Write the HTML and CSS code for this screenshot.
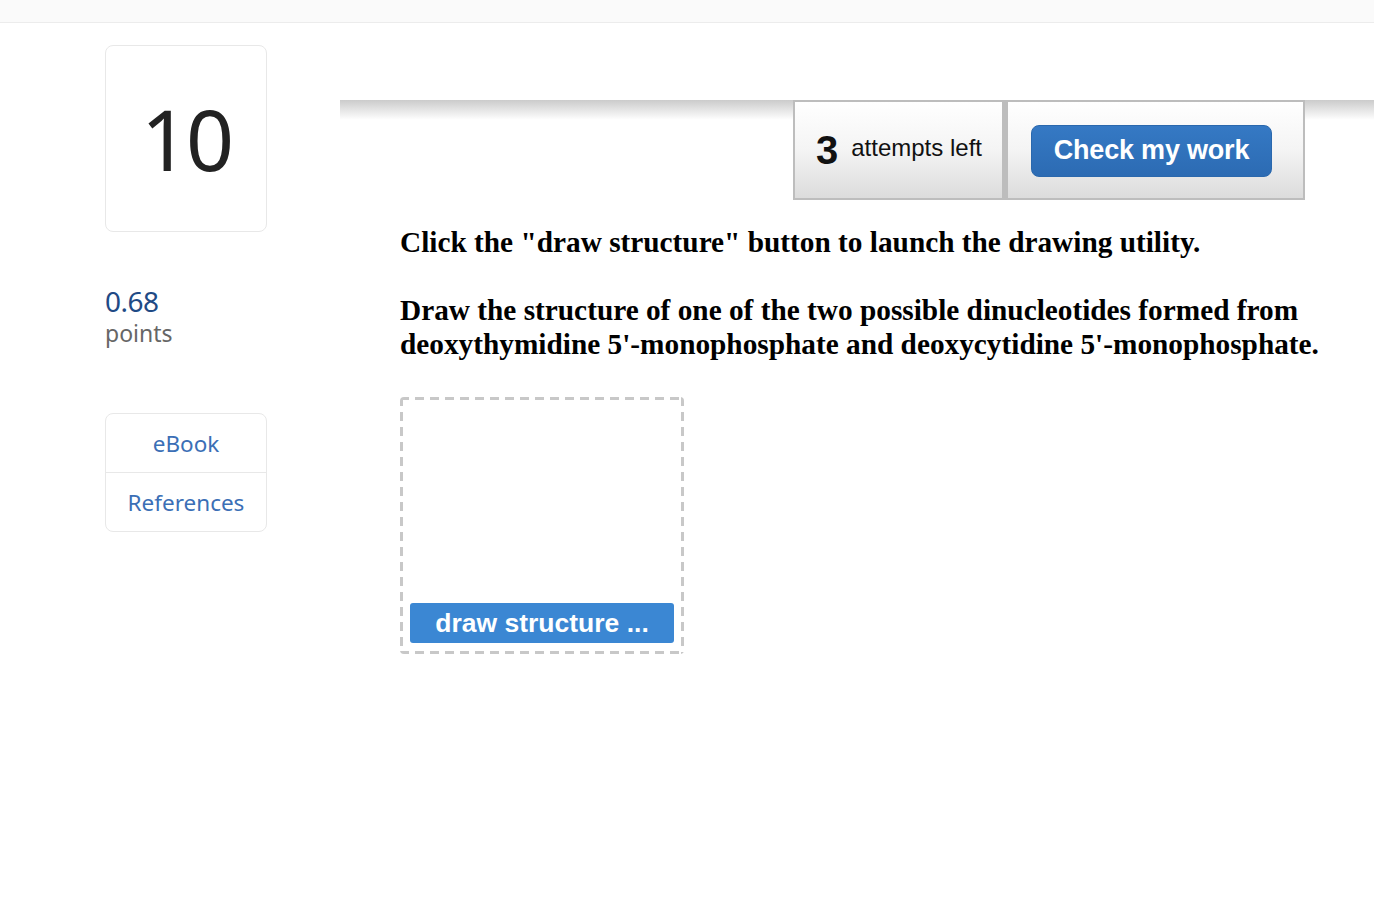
FILE: index.html
```html
<!DOCTYPE html>
<html>
<head>
  <title>Question 10</title>
  <link rel="stylesheet" href="styles.css">
</head>
<body>
  <div class="topbar"></div>
  <div class="page">
    <div class="sidebar">
      <div class="number-box">10</div>
      <div class="score">
        <span class="score-value">0.68</span>
        <span class="score-label">points</span>
      </div>
      <div class="links">
        <a class="link-row" href="#">eBook</a>
        <a class="link-row" href="#">References</a>
      </div>
    </div>
    <div class="content">
      <div class="header">
        <div class="header-boxes">
          <div class="attempts">
            <span class="attempts-count">3</span>
            <span class="attempts-label">attempts left</span>
          </div>
          <div class="check">
            <button class="check-btn">Check my work</button>
          </div>
        </div>
      </div>
      <div class="question">
        <p>Click the "draw structure" button to launch the drawing utility.</p>
        <p>Draw the structure of one of the two possible dinucleotides formed from deoxythymidine 5'-monophosphate and deoxycytidine 5'-monophosphate.</p>
        <div class="draw-area">
          <button class="draw-btn">draw structure ...</button>
        </div>
      </div>
    </div>
  </div>
</body>
</html>
```

FILE: styles.css
```css
:root {
  --border-light: #e8e8e8;
  --link: #3b6fb6;
  --score: #1f4a85;
  --box-border: #bdbdbd;
  --dash: #c8c8c8;
}

body {
  margin: 0;
  background: #ffffff;
  font-family: 'Noto Sans', 'Open Sans', sans-serif;
  color: #222;
}

.topbar {
  height: 22px;
  background: #fafafa;
  border-bottom: 1px solid #ececec;
}

.page {
  display: flex;
}

.sidebar {
  width: 162px;
  margin: 22px 0 0 105px;
  display: flex;
  flex-direction: column;
}

.number-box {
  height: 185px;
  border: 1px solid var(--border-light);
  border-radius: 8px;
  display: flex;
  align-items: center;
  justify-content: center;
  font-size: 84px;
  font-weight: 400;
  color: #222;
  letter-spacing: -3px;
  line-height: 1;
}

.score {
  display: flex;
  flex-direction: column;
  margin-top: 53px;
}

.score-value {
  font-size: 28px;
  color: var(--score);
  line-height: 32px;
  letter-spacing: -0.5px;
}

.score-label {
  font-size: 23px;
  color: #666;
  line-height: 32px;
}

.links {
  margin-top: 64px;
  border: 1px solid var(--border-light);
  border-radius: 8px;
  display: flex;
  flex-direction: column;
}

.link-row {
  height: 58px;
  display: flex;
  align-items: center;
  justify-content: center;
  font-size: 22.5px;
  color: var(--link);
  text-decoration: none;
}

.link-row + .link-row {
  border-top: 1px solid var(--border-light);
}

.content {
  flex: 1;
  margin: 77px 0 0 73px;
}

.header {
  height: 100px;
  background: linear-gradient(to bottom, #cbcbcb 0px, #ffffff 20px, #ffffff 100%);
  display: flex;
  justify-content: flex-end;
  padding-right: 69px;
}

.header-boxes {
  display: flex;
  height: 100px;
}

.attempts,
.check {
  box-sizing: border-box;
  height: 100px;
  border: 2px solid var(--box-border);
  background: linear-gradient(to bottom, #ffffff 0%, #f4f4f4 50%, #dcdcdc 100%);
  display: flex;
  align-items: center;
}

.attempts {
  width: 211px;
  padding-left: 21px;
  font-family: 'Liberation Sans', Arial, sans-serif;
}

.attempts-count {
  font-size: 40px;
  font-weight: 700;
  margin-right: 13px;
  color: #111;
}

.attempts-label {
  font-size: 24px;
  color: #111;
  margin-top: -4px;
}

.check {
  width: 301px;
  border-left-width: 4px;
  padding-left: 23px;
}

.check-btn {
  width: 241px;
  height: 52px;
  margin-top: 1px;
  border: 1px solid #2a68ad;
  border-radius: 8px;
  background: linear-gradient(to bottom, #3579c4, #2c6bb3);
  color: #fff;
  font-family: 'Liberation Sans', Arial, sans-serif;
  font-size: 27px;
  font-weight: 700;
  letter-spacing: -0.2px;
  cursor: pointer;
}

.question {
  padding: 25px 0 0 60px;
  font-family: 'Liberation Serif', 'Times New Roman', serif;
  font-weight: 700;
  font-size: 29.3px;
  line-height: 34px;
  color: #000;
}

.question p {
  margin: 0 0 34px 0;
}

.question p:last-of-type {
  margin-bottom: 36px;
}

.draw-area {
  width: 284px;
  height: 257px;
  box-sizing: border-box;
  border-radius: 4px;
  background:
    repeating-linear-gradient(to right, var(--dash) 0 9px, transparent 9px 15px) left top / 100% 3px no-repeat,
    repeating-linear-gradient(to right, var(--dash) 0 9px, transparent 9px 15px) left bottom / 100% 3px no-repeat,
    repeating-linear-gradient(to bottom, var(--dash) 0 9px, transparent 9px 15px) left top / 3px 100% no-repeat,
    repeating-linear-gradient(to bottom, var(--dash) 0 9px, transparent 9px 15px) right top / 3px 100% no-repeat;
  display: flex;
  align-items: flex-end;
  justify-content: center;
  padding-bottom: 11px;
}

.draw-btn {
  width: 264px;
  height: 40px;
  border: none;
  border-radius: 3px;
  background: #3b87d3;
  color: #fff;
  font-family: 'Liberation Sans', Arial, sans-serif;
  font-size: 26.5px;
  font-weight: 700;
  cursor: pointer;
}
```
